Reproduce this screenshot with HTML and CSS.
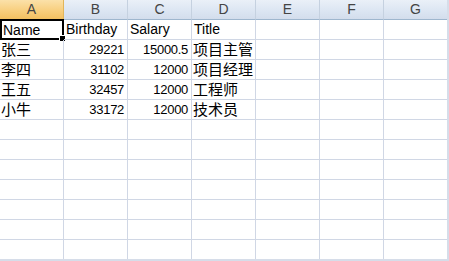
FILE: index.html
```html
<!DOCTYPE html>
<html lang="zh">
<head>
    <meta charset="utf-8" />
    <title>Sheet1</title>
    <link rel="stylesheet" href="styles.css">
</head>
<body>
    <div class="sheet">
        <div class="head sel">A</div>
        <div class="head">B</div>
        <div class="head">C</div>
        <div class="head">D</div>
        <div class="head">E</div>
        <div class="head">F</div>
        <div class="head">G</div>

        <div class="cell active">Name<span class="handle"></span></div>
        <div class="cell">Birthday</div>
        <div class="cell">Salary</div>
        <div class="cell">Title</div>
        <div class="cell"></div><div class="cell"></div><div class="cell"></div>

        <div class="cell cjk">张三</div>
        <div class="cell num">29221</div>
        <div class="cell num">15000.5</div>
        <div class="cell cjk">项目主管</div>
        <div class="cell"></div><div class="cell"></div><div class="cell"></div>

        <div class="cell cjk">李四</div>
        <div class="cell num">31102</div>
        <div class="cell num">12000</div>
        <div class="cell cjk">项目经理</div>
        <div class="cell"></div><div class="cell"></div><div class="cell"></div>

        <div class="cell cjk">王五</div>
        <div class="cell num">32457</div>
        <div class="cell num">12000</div>
        <div class="cell cjk">工程师</div>
        <div class="cell"></div><div class="cell"></div><div class="cell"></div>

        <div class="cell cjk">小牛</div>
        <div class="cell num">33172</div>
        <div class="cell num">12000</div>
        <div class="cell cjk">技术员</div>
        <div class="cell"></div><div class="cell"></div><div class="cell"></div>
    </div>
    <script>
        // pad the grid with empty rows
        var sheet = document.querySelector('.sheet');
        for (var i = 0; i < 7 * 7; i++) {
            var c = document.createElement('div');
            c.className = 'cell';
            sheet.appendChild(c);
        }
    </script>
</body>
</html>
```

FILE: styles.css
```css
html, body{
    margin: 0;
    background: #fff;
}
body{
    width: 449px;
    height: 261px;
    overflow: hidden;
    background: #d6dde9;
}
.sheet{
    display: grid;
    grid-template-columns: repeat(7, 64px);
    grid-auto-rows: 20px;
    width: 447px;
    height: 259px;
    overflow: hidden;
    background: #fff;
    font-family: "Liberation Sans", "Noto Sans CJK SC", sans-serif;
    font-size: 14px;
    color: #000;
}
.head{
    box-sizing: border-box;
    border-right: 1px solid #c5d1e0;
    border-bottom: 1px solid #9eb6ce;
    background: linear-gradient(#eaf0f8, #dbe5f2 60%, #d3ddec);
    color: #444;
    font-size: 14px;
    line-height: 19px;
    text-align: center;
}
.head.sel{
    background: linear-gradient(#fbe1a9, #f8cf7f 55%, #f3c060);
    border-right-color: #e2b65a;
    border-bottom-color: #c29a4a;
}
.cell{
    position: relative;
    box-sizing: border-box;
    border-right: 1px solid #d0d7e5;
    border-bottom: 1px solid #d0d7e5;
    line-height: 19px;
    padding: 0 2px;
    white-space: nowrap;
}
.cell.num{
    text-align: right;
    font-size: 13px;
    letter-spacing: -0.3px;
    padding-right: 3px;
}
.cell.cjk{
    font-size: 15px;
    padding-left: 1px;
}
.cell.active{
    margin: -1px 0 0 0;
    border: 2px solid #000;
    line-height: 18px;
    padding-left: 1px;
}
.handle{
    position: absolute;
    right: -4px;
    bottom: -4px;
    width: 5px;
    height: 5px;
    background: #000;
    border: 1px solid #fff;
}
```
